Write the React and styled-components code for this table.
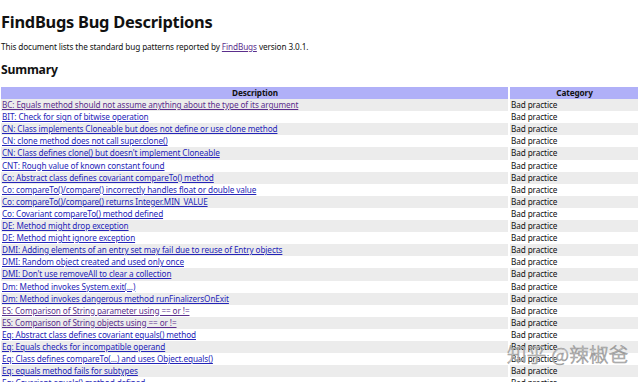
import React from "react";
import styled, { createGlobalStyle } from "styled-components";

const GlobalStyle = createGlobalStyle`
  html, body {
    margin: 0;
    padding: 0;
    background: #fff;
    overflow: hidden;
  }
  body {
    font-family: "Noto Sans", "Open Sans", sans-serif;
    color: #111;
  }
`;

const Page = styled.div`
  position: relative;
  width: 640px;
  height: 382px;
  padding: 0 0 0 1px;
  box-sizing: border-box;
  overflow: hidden;
`;

const Title = styled.h1`
  margin: 0;
  padding-top: 10px;
  font-size: 16.4px;
  line-height: 24px;
  font-weight: 700;
  letter-spacing: -0.25px;
`;

const Intro = styled.p`
  margin: 7px 0 0;
  font-size: 8.2px;
  line-height: 12px;
  letter-spacing: -0.1px;

  a {
    color: #5b2e8c;
  }
`;

const Subtitle = styled.h2`
  margin: 8px 0 0;
  font-size: 12.2px;
  line-height: 18px;
  font-weight: 700;
  letter-spacing: -0.2px;
`;

const Table = styled.div`
  margin-top: 8px;
  width: 637px;
  display: flex;
  flex-direction: column;
  font-size: 8.2px;
  letter-spacing: -0.1px;
`;

const Row = styled.div`
  display: grid;
  grid-template-columns: 507px 1fr;
  column-gap: 2px;
  height: 12.1px;
  line-height: 12.1px;
  background: ${(p) => (p.$head ? "#b0b0f8" : p.$odd ? "#ececec" : "#fff")};
  font-weight: ${(p) => (p.$head ? 700 : 400)};
  text-align: ${(p) => (p.$head ? "center" : "left")};
`;

const Cell = styled.div`
  white-space: nowrap;
  overflow: hidden;
  padding-left: 1px;
  box-shadow: ${(p) => (p.$cat ? "-2px 0 0 #fff" : "none")};
`;

const BugLink = styled.a`
  color: ${(p) => (p.$visited ? "#5b2e8c" : "#2424b8")};
  text-decoration: underline;
`;

const Watermark = styled.div`
  position: absolute;
  left: 507px;
  top: 339px;
  font-family: "Noto Sans CJK SC", sans-serif;
  font-size: 19.5px;
  font-weight: 300;
  letter-spacing: 0.3px;
  color: rgba(255, 255, 255, 0.85);
  -webkit-text-stroke: 0.7px #9c9c9c;
  pointer-events: none;
`;

const bugs = [
  ["BC: Equals method should not assume anything about the type of its argument", true],
  ["BIT: Check for sign of bitwise operation"],
  ["CN: Class implements Cloneable but does not define or use clone method"],
  ["CN: clone method does not call super.clone()"],
  ["CN: Class defines clone() but doesn't implement Cloneable"],
  ["CNT: Rough value of known constant found"],
  ["Co: Abstract class defines covariant compareTo() method"],
  ["Co: compareTo()/compare() incorrectly handles float or double value"],
  ["Co: compareTo()/compare() returns Integer.MIN_VALUE"],
  ["Co: Covariant compareTo() method defined"],
  ["DE: Method might drop exception"],
  ["DE: Method might ignore exception"],
  ["DMI: Adding elements of an entry set may fail due to reuse of Entry objects"],
  ["DMI: Random object created and used only once"],
  ["DMI: Don't use removeAll to clear a collection"],
  ["Dm: Method invokes System.exit(...)"],
  ["Dm: Method invokes dangerous method runFinalizersOnExit"],
  ["ES: Comparison of String parameter using == or !=", true],
  ["ES: Comparison of String objects using == or !=", true],
  ["Eq: Abstract class defines covariant equals() method"],
  ["Eq: Equals checks for incompatible operand"],
  ["Eq: Class defines compareTo(...) and uses Object.equals()"],
  ["Eq: equals method fails for subtypes"],
  ["Eq: Covariant equals() method defined"],
];

export default function App() {
  return (
    <Page>
      <GlobalStyle />
      <Title>FindBugs Bug Descriptions</Title>
      <Intro>
        This document lists the standard bug patterns reported by{" "}
        <a href="#findbugs">FindBugs</a> version 3.0.1.
      </Intro>
      <Subtitle>Summary</Subtitle>
      <Table>
        <Row $head>
          <Cell>Description</Cell>
          <Cell $cat>Category</Cell>
        </Row>
        {bugs.map(([text, visited], i) => (
          <Row key={i} $odd={i % 2 === 0}>
            <Cell>
              <BugLink href="#bug" $visited={visited}>
                {text}
              </BugLink>
            </Cell>
            <Cell $cat>Bad practice</Cell>
          </Row>
        ))}
      </Table>
      <Watermark>知乎 @辣椒爸</Watermark>
    </Page>
  );
}
